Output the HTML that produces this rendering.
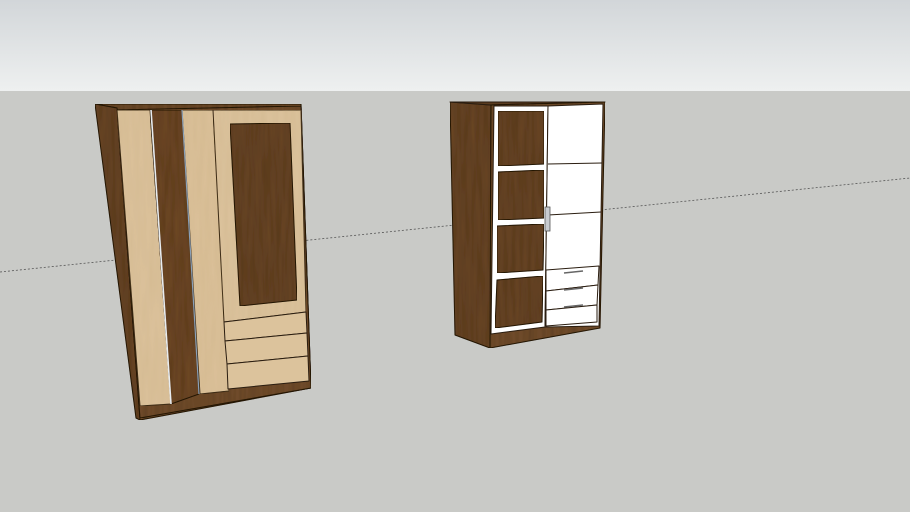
<!DOCTYPE html>
<html><head><meta charset="utf-8"><style>
html,body{margin:0;padding:0;width:910px;height:512px;overflow:hidden;background:#c9cac7}
</style></head><body>
<svg width="910" height="512" viewBox="0 0 910 512" xmlns="http://www.w3.org/2000/svg">
<defs>
<linearGradient id="sky" x1="0" y1="0" x2="0" y2="1">
<stop offset="0" stop-color="#d2d6d9"/><stop offset="1" stop-color="#eef0f0"/></linearGradient>
<filter id="grain" x="0" y="0" width="100%" height="100%">
<feTurbulence type="fractalNoise" baseFrequency="0.25 0.02" numOctaves="2" seed="3"/>
<feColorMatrix values="0 0 0 0 0  0 0 0 0 0  0 0 0 0 0  0 0 0 0.35 0"/>
<feComposite in2="SourceGraphic" operator="in"/>
<feMerge><feMergeNode in="SourceGraphic"/><feMergeNode/></feMerge>
</filter>
<filter id="grainL" x="0" y="0" width="100%" height="100%">
<feTurbulence type="fractalNoise" baseFrequency="0.2 0.02" numOctaves="2" seed="7"/>
<feColorMatrix values="0 0 0 0 0.4  0 0 0 0 0.25  0 0 0 0 0.1  0 0 0 0.15 0"/>
<feComposite in2="SourceGraphic" operator="in"/>
<feMerge><feMergeNode in="SourceGraphic"/><feMergeNode/></feMerge>
</filter>
</defs>
<rect width="910" height="91" fill="url(#sky)"/>
<rect y="91" width="910" height="421" fill="#c9cac7"/>
<line x1="0" y1="272" x2="910" y2="178" stroke="#555" stroke-width="0.8" stroke-dasharray="2,2"/>

<!-- LEFT WARDROBE -->
<g stroke="#2a1d10" stroke-width="1" stroke-linejoin="round">
<polygon points="95,104 301,104 311,388 140,420 117,108" fill="#6e4b2a" filter="url(#grain)"/>
<polygon points="95,104 117,108 140,420 136,418" fill="#6a4727" filter="url(#grain)"/>
<polygon points="117,110 301,106 311,388 140,418" fill="#74502d" filter="url(#grain)"/>
<polygon points="117,110 150,110 171,404 140,406" fill="#dcc29b" filter="url(#grainL)"/>
<polygon points="150,110 182,110 199,394 171,404" fill="#6f4a28" filter="url(#grain)"/>
<polygon points="182,110 213,110 229,391 200,394" fill="#dbc19a" filter="url(#grainL)"/>
<polygon points="213,110 301,110 306,312 224,322" fill="#dcc39c" filter="url(#grainL)"/>
<polygon points="230,124 290,123 297,300 240,306" fill="#6b4726" filter="url(#grain)"/>
<polygon points="224,322 306,312 307,333 225,341" fill="#dcc39c"/>
<polygon points="225,341 307,333 308,356 227,364" fill="#dcc39c"/>
<polygon points="227,364 308,356 309,381 228,389" fill="#dcc39c"/>
</g>
<line x1="151" y1="110" x2="171" y2="404" stroke="#e8ecf0" stroke-width="1.6"/>
<line x1="182" y1="110" x2="199" y2="394" stroke="#8aa0b8" stroke-width="1.2"/>

<!-- RIGHT WARDROBE -->
<g stroke="#2a1d10" stroke-width="1" stroke-linejoin="round">
<polygon points="450,102 491,105 490,348 455,335" fill="#6a4727" filter="url(#grain)"/>
<polygon points="450,102 605,102 491,105" fill="#5a3c20"/>
<polygon points="491,105 605,102 600,328 490,348" fill="#74502d" filter="url(#grain)"/>
<polygon points="494,106 548,106 545,327 491,334" fill="#fff"/>
<polygon points="498,111 544,111 544,164 498,166" fill="#6b4726" filter="url(#grain)"/>
<polygon points="498,172 544,170 544,218 498,220" fill="#6b4726" filter="url(#grain)"/>
<polygon points="497,226 544,224 543,270 497,273" fill="#6b4726" filter="url(#grain)"/>
<polygon points="497,280 543,276 542,322 495,328" fill="#6b4726" filter="url(#grain)"/>
<polygon points="548,106 603,104 599,326 545,327" fill="#fff"/>
<line x1="548" y1="164" x2="602" y2="163" />
<line x1="548" y1="215" x2="601" y2="212" />
<polygon points="546,270 599,266 598,285 546,291" fill="#fff"/>
<polygon points="546,291 598,285 597,305 546,310" fill="#fff"/>
<polygon points="546,310 597,305 597,322 546,326" fill="#fff"/>
</g>
<rect x="545" y="207" width="5" height="24" fill="#c8cbd0" stroke="#555" stroke-width="0.8"/>
<g stroke="#666" stroke-width="1.5">
<line x1="564" y1="273" x2="583" y2="271"/>
<line x1="564" y1="290" x2="583" y2="288"/>
<line x1="564" y1="307" x2="583" y2="305"/>
</g>
</svg>
</body></html>
